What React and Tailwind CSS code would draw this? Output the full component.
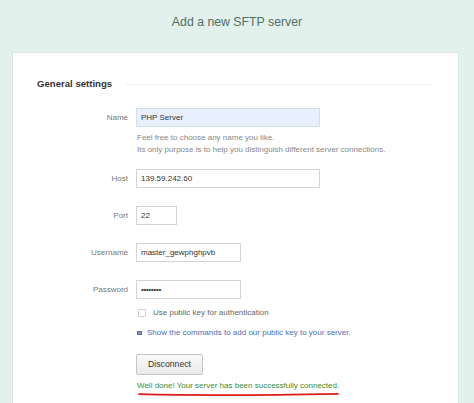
import React from "react";

function Row({ label, children, className = "" }) {
  return (
    <div className={"flex items-center " + className}>
      <div className="w-[123px] shrink-0 text-right pr-[8px] text-[8px] leading-[19px] text-[#777]">{label}</div>
      {children}
    </div>
  );
}

function Field({ value, w, autofill }) {
  return (
    <div
      className={
        "h-[19px] border flex items-center pl-[4px] text-[8px] text-[#333] " +
        (autofill ? "bg-[#e8f0fe] border-[#d3deef] " : "bg-white border-[#d4d4d4] ") +
        w
      }
    >
      {value}
    </div>
  );
}

export default function App() {
  return (
    <div className="min-h-screen bg-[#e3f1ec] font-['Liberation_Sans',Arial,sans-serif] overflow-hidden">
      <div className="h-[52px] pt-[15px] text-center text-[12.3px] leading-[15px] text-[#506f67]">
        Add a new SFTP server
      </div>
      <div className="ml-[12px] mr-[15px] bg-white border border-[#d9e6e1] pt-[25px] pb-[24px]">
        <div className="flex items-center pl-[24px] pr-[26px]">
          <div className="text-[9.6px] leading-[12px] font-bold text-[#333]">General settings</div>
          <div className="flex-1 h-px bg-[#f3f3f3] ml-[13px]" />
        </div>

        <Row label="Name" className="mt-[18px]">
          <Field value="PHP Server" w="w-[184px]" autofill />
        </Row>
        <div className="ml-[124px] mt-[5px] text-[8px] leading-[11.6px] text-[#888]">
          <div>Feel free to choose any name you like.</div>
          <div>Its only purpose is to help you distinguish different server connections.</div>
        </div>

        <Row label="Host" className="mt-[14px]">
          <Field value="139.59.242.60" w="w-[184px]" />
        </Row>
        <Row label="Port" className="mt-[18px]">
          <Field value="22" w="w-[41px]" />
        </Row>
        <Row label="Username" className="mt-[18px]">
          <Field value="master_gewphghpvb" w="w-[105px]" />
        </Row>
        <Row label="Password" className="mt-[18px]">
          <Field value={<span className="tracking-[-0.3px]">••••••••</span>} w="w-[105px]" />
        </Row>

        <div className="ml-[125px] mt-[9px] flex items-center h-[10px]">
          <div className="w-[8px] h-[8px] border border-[#cfcfcf] rounded-[1px] bg-white" />
          <span className="ml-[7px] text-[8px] text-[#666] leading-[10px]">Use public key for authentication</span>
        </div>

        <div className="ml-[124px] mt-[10px] flex items-center h-[10px]">
          <div className="w-[5px] h-[4px] bg-[#7f93c9] border border-[#5c74b6]" />
          <span className="ml-[5px] text-[8px] text-[#4f6db3] leading-[10px]">
            Show the commands to add our public key to your server.
          </span>
        </div>

        <div className="ml-[123px] mt-[16px]">
          <div className="w-[67px] h-[21px] border border-[#c4c4c4] rounded-[2px] bg-gradient-to-b from-[#fafafa] to-[#e9e9e9] flex items-center justify-center text-[8.7px] text-[#333]">
            Disconnect
          </div>
        </div>

        <div className="ml-[124px] mt-[6px] text-[8px] leading-[10px] text-[#3a8a32]">
          Well done! Your server has been successfully connected.
        </div>
        <div className="ml-[125px] mt-[1px]">
          <svg width="202" height="5" viewBox="0 0 202 5">
            <path d="M1 2.2 C 50 3.4, 120 3.4, 200 1.8" stroke="#e01b1b" strokeWidth="1.8" fill="none" strokeLinecap="round" />
          </svg>
        </div>
      </div>
    </div>
  );
}
